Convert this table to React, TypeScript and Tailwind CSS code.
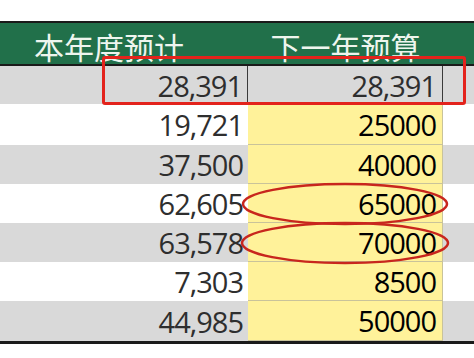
const rows: { a: string; b: string }[] = [
  { a: "28,391", b: "28,391" },
  { a: "19,721", b: "25000" },
  { a: "37,500", b: "40000" },
  { a: "62,605", b: "65000" },
  { a: "63,578", b: "70000" },
  { a: "7,303", b: "8500" },
  { a: "44,985", b: "50000" },
];

const heights = ["h-[38px]", "h-[41px]", "h-[39px]", "h-[39px]", "h-[39px]", "h-[39px]", "h-[40px]"];

export default function App() {
  return (
    <div className="relative w-[474px] h-[358px] bg-white overflow-hidden font-['Open_Sans','Noto_Sans_CJK_SC',sans-serif]">
      <div className="h-[21px]" />
      <div className="border-t-2 border-b-2 border-[#1a1a1a]">
        <div className="flex h-[41px] bg-[#21704a] text-[#eef5ee] text-[30px] leading-[36px] items-end pb-0">
          <div className="w-[248px] pr-[30px] text-center font-['Noto_Sans_CJK_SC',sans-serif]">本年度预计</div>
          <div className="w-[195px] text-center font-['Noto_Sans_CJK_SC',sans-serif]">下一年预算</div>
        </div>
      </div>
      {rows.map((r, i) => {
        const gray = i % 2 === 0;
        const first = i === 0;
        return (
          <div key={i} className={`flex ${heights[i]} ${gray ? "bg-[#d9d9d9]" : "bg-white"} text-[29px] tracking-[-1px] leading-none`}>
            <div
              className={`w-[248px] flex items-center justify-end pr-[5px] text-[#2e2e2e] ${
                first ? "border-r-[1.5px] border-[#3a3a3a]" : ""
              }`}
            >
              {r.a}
            </div>
            <div
              className={`w-[195px] flex items-center justify-end pr-[6px] ${
                first
                  ? "bg-[#d9d9d9] text-[#2e2e2e] border-r-[1.5px] border-[#3a3a3a]"
                  : "bg-[#fff29a] text-black border-r border-b border-[#c9c39a]"
              }`}
            >
              {r.b}
            </div>
            <div className="flex-1" />
          </div>
        );
      })}
      <div className="h-[3px] bg-[#1a1a1a]" />

      <div className="absolute left-[102px] top-[56px] w-[364px] h-[49px] border-[3px] border-[#e3231c] rounded-[3px]" />
      <svg className="absolute left-0 top-0" width="474" height="358">
        <ellipse cx="345" cy="204" rx="102" ry="20" fill="none" stroke="#c8261d" strokeWidth="2.5" />
        <ellipse cx="345" cy="243" rx="103" ry="20" fill="none" stroke="#c8261d" strokeWidth="2.5" />
      </svg>
    </div>
  );
}
